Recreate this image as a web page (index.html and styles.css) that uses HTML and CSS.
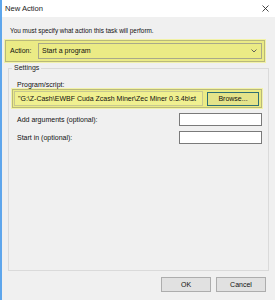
FILE: index.html
```html
<!DOCTYPE html>
<html>
<head>
<meta charset="utf-8">
<link rel="stylesheet" href="styles.css">
</head>
<body>
<div class="window">
  <div class="titlebar">
    <span class="title">New Action</span>
    <svg class="close" width="7" height="7" viewBox="0 0 7 7"><path d="M0.5 0.5L6.5 6.5M6.5 0.5L0.5 6.5" stroke="#333" stroke-width="0.9" fill="none"/></svg>
  </div>
  <div class="content">
    <p class="intro">You must specify what action this task will perform.</p>
    <div class="hl action-row">
      <span class="action-lbl">Action:</span>
      <div class="combo">
        <span>Start a program</span>
        <svg class="chev" width="6" height="4" viewBox="0 0 6 4"><path d="M0.5 0.5L3 3L5.5 0.5" stroke="#555" stroke-width="0.9" fill="none"/></svg>
      </div>
    </div>
    <fieldset class="settings">
      <legend>Settings</legend>
      <div class="prog-lbl">Program/script:</div>
      <div class="hl prog-row">
        <div class="path">"G:\Z-Cash\EWBF Cuda Zcash Miner\Zec Miner 0.3.4b\st</div>
        <div class="btn browse">Browse...</div>
      </div>
      <div class="field-row first"><span>Add arguments (optional):</span><div class="textbox"></div></div>
      <div class="field-row"><span>Start in (optional):</span><div class="textbox"></div></div>
    </fieldset>
    <div class="buttons">
      <div class="btn ok">OK</div>
      <div class="btn cancel">Cancel</div>
    </div>
  </div>
</div>
</body>
</html>
```
FILE: styles.css
```css
html, body {
  margin: 0;
  padding: 0;
}
body {
  width: 275px;
  height: 300px;
  overflow: hidden;
  font-family: "Liberation Sans", Arial, sans-serif;
  font-size: 7px;
  color: #111;
}
.window {
  box-sizing: border-box;
  height: 300px;
  border-left: 2px solid #5ea6ec;
  background: #f0f0f0;
  display: flex;
  flex-direction: column;
}
.titlebar {
  height: 17px;
  background: #fff;
  display: flex;
  align-items: center;
  justify-content: space-between;
  padding: 0 6px 0 3px;
  flex: none;
}
.title {
  font-size: 7.6px;
  line-height: 10px;
  color: #222;
}
.close {
  display: block;
  margin-top: -1px;
}
.content {
  flex: 1;
  display: flex;
  flex-direction: column;
}
.intro {
  margin: 9px 0 0 8px;
  line-height: 10px;
  font-size: 6.4px;
}
.hl {
  box-sizing: border-box;
  background: #ebeb85;
  border: 1px solid #b9b97a;
  box-shadow: 0 0 0 1px #f2f2a8;
}
.action-row {
  margin: 4px 0 0 3px;
  width: 260px;
  height: 22px;
  display: flex;
  align-items: center;
  padding-left: 4px;
}
.action-lbl {
  width: 28px;
  line-height: 10px;
}
.combo {
  box-sizing: border-box;
  width: 224px;
  height: 16px;
  border: 1px solid #a9a98a;
  display: flex;
  align-items: center;
  justify-content: space-between;
  padding: 0 4px 0 3px;
  line-height: 10px;
}
.chev {
  display: block;
}
.settings {
  flex: 1;
  margin: 1px 6px 0 6px;
  padding: 0 3px;
  border: 1px solid #dadada;
  min-width: 0;
}
.settings legend {
  padding: 0 2px;
  line-height: 10px;
  color: #222;
}
.prog-lbl {
  margin: 7px 0 0 5px;
  line-height: 9px;
}
.prog-row {
  width: 250px;
  height: 19px;
  display: flex;
  align-items: center;
  padding-left: 1px;
}
.path {
  box-sizing: border-box;
  width: 189px;
  height: 15px;
  border: 1px solid #c8c890;
  background: #f0f090;
  line-height: 13px;
  padding-left: 3px;
  white-space: nowrap;
  overflow: hidden;
}
.btn {
  box-sizing: border-box;
  display: flex;
  align-items: center;
  justify-content: center;
  background: #e1e1e1;
  border: 1px solid #adadad;
}
.browse {
  width: 52px;
  height: 14px;
  margin-left: 4px;
  border-color: #2f6f73;
  background: #e4e48a;
}
.field-row {
  display: flex;
  align-items: center;
  justify-content: space-between;
  margin: 5px 3px 0 5px;
  line-height: 10px;
}
.field-row.first {
  margin-top: 5px;
}
.textbox {
  box-sizing: border-box;
  width: 83px;
  height: 13px;
  background: #fff;
  border: 1px solid #7a7a7a;
}
.buttons {
  display: flex;
  justify-content: flex-end;
  gap: 5px;
  margin: 6px 9px 8px 0;
}
.ok, .cancel {
  width: 50px;
  height: 15px;
}
```
